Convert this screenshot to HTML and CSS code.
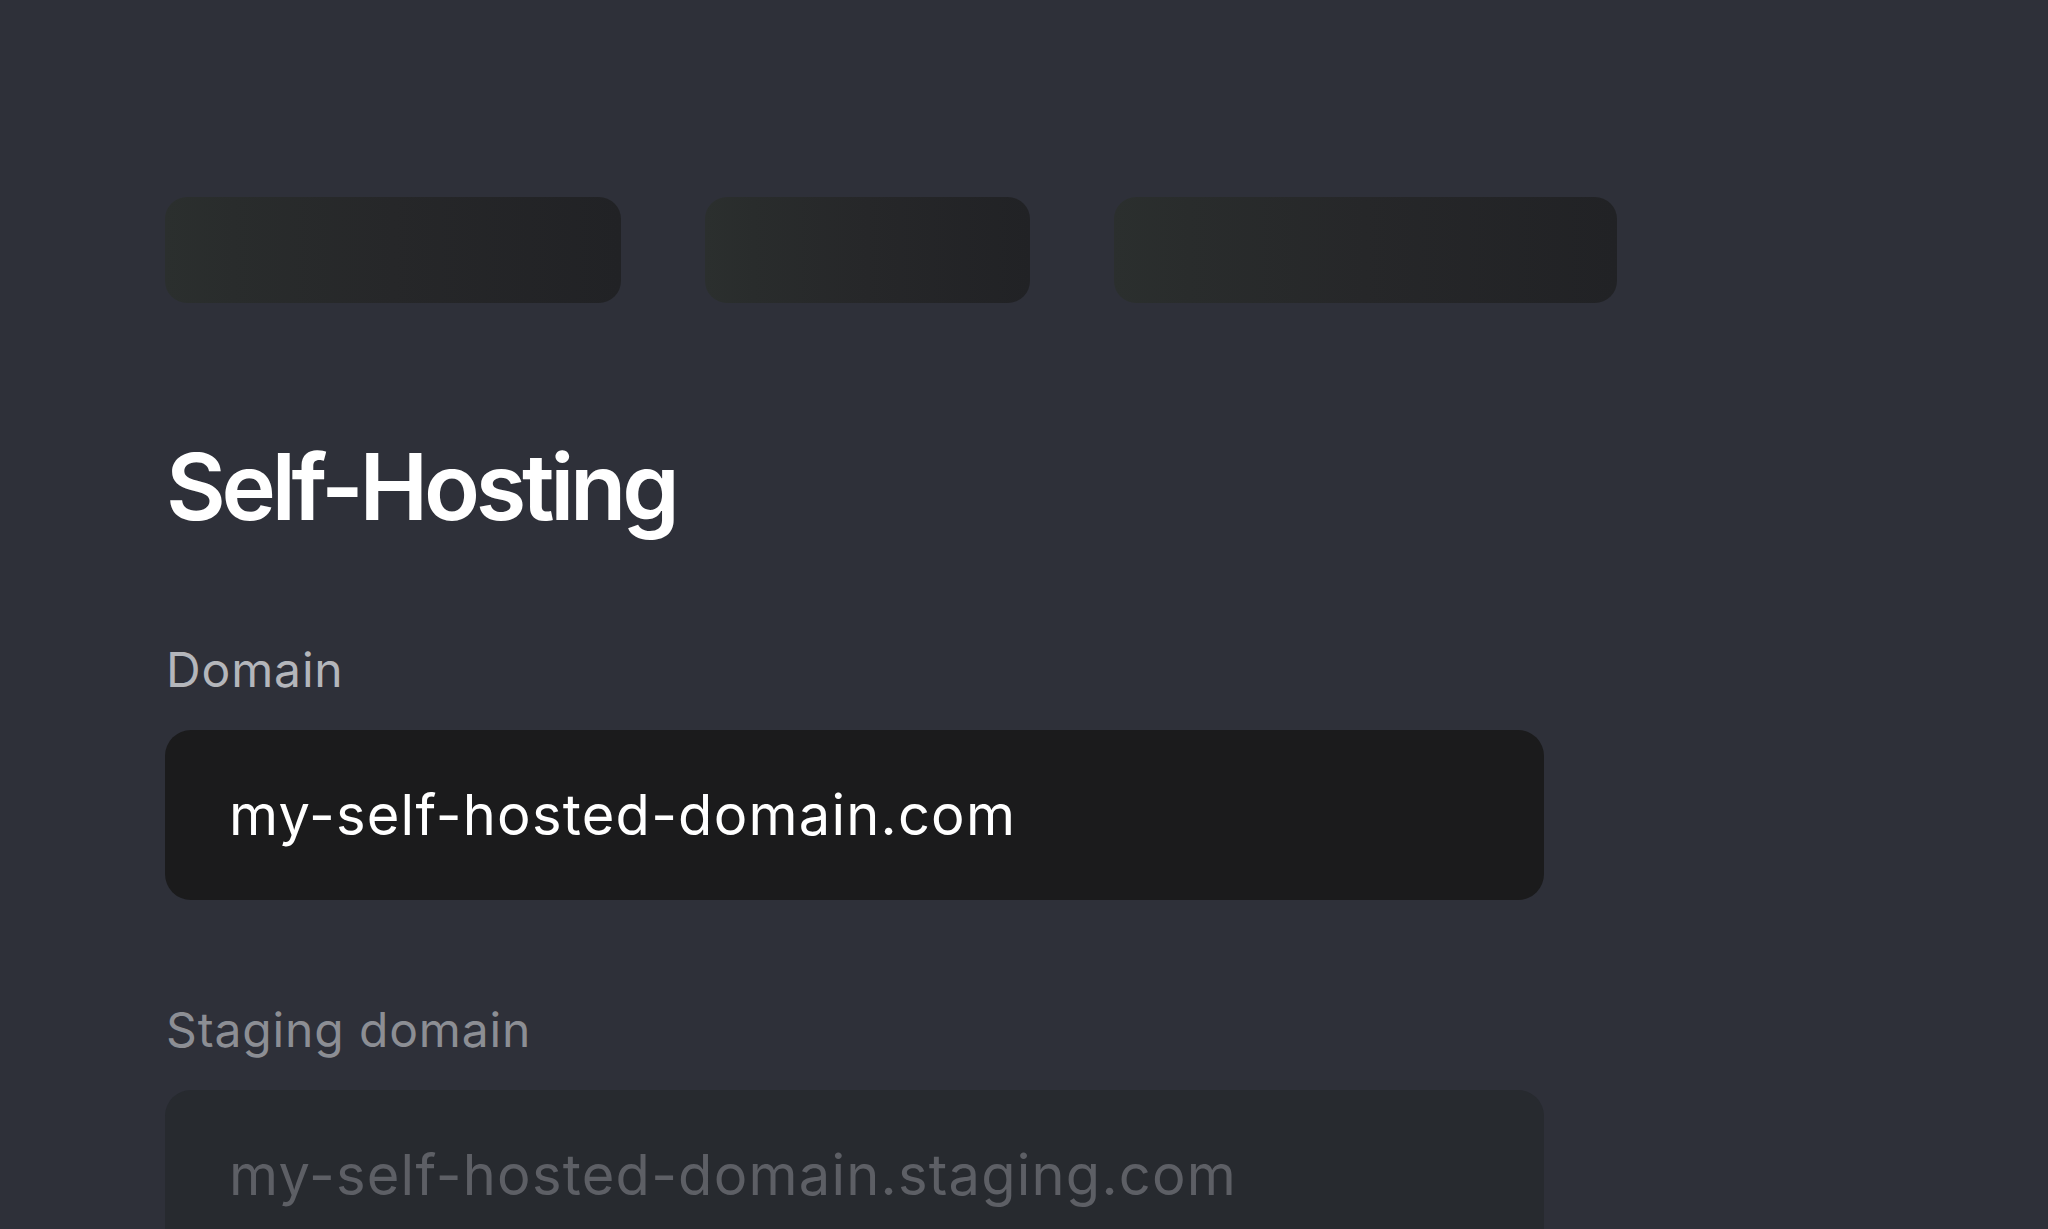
FILE: index.html
```html
<!DOCTYPE html>
<html lang="en">
<head>
<meta charset="utf-8">
<title>Self-Hosting</title>
<link rel="stylesheet" href="styles.css">
</head>
<body>
<main class="page">
  <div class="skeleton-row">
    <div class="skeleton skeleton-a"></div>
    <div class="skeleton skeleton-b"></div>
    <div class="skeleton skeleton-c"></div>
  </div>
  <h1 class="title">Self-Hosting</h1>
  <div class="field">
    <label class="label">Domain</label>
    <div class="input">my-self-hosted-domain.com</div>
  </div>
  <div class="field field-faded">
    <label class="label">Staging domain</label>
    <div class="input">my-self-hosted-domain.staging.com</div>
  </div>
</main>
</body>
</html>
```
FILE: styles.css
```css
html, body {
  margin: 0;
  padding: 0;
  background: #2e3039;
  height: 100%;
  overflow: hidden;
}
body {
  font-family: Inter, "Noto Sans", sans-serif;
  color: #ffffff;
}
.page {
  padding: 197px 0 0 165px;
}
.skeleton-row {
  display: flex;
  gap: 84px;
}
.skeleton {
  height: 106px;
  border-radius: 22px;
  background: linear-gradient(90deg, #2b2f2e 0%, #292c2c 15%, #262729 50%, #212225 100%);
}
.skeleton-a { width: 456px; }
.skeleton-b { width: 325px; }
.skeleton-c { width: 503px; }
.title {
  margin: 138px 0 0 1px;
  font-size: 92px;
  line-height: 92px;
  font-weight: 600;
  letter-spacing: -0.046em;
}
.field {
  display: flex;
  flex-direction: column;
  gap: 36px;
  width: 1379px;
  margin-top: 113px;
}
.field + .field {
  margin-top: 106px;
}
.label {
  font-size: 48px;
  line-height: 48px;
  letter-spacing: 0.018em;
  color: #b4b6bb;
  padding-left: 1px;
}
.input {
  height: 170px;
  box-sizing: border-box;
  display: flex;
  align-items: center;
  padding-left: 64px;
  border-radius: 26px;
  background: #1b1b1c;
  font-size: 56px;
  line-height: 56px;
  letter-spacing: 0.022em;
  color: #ffffff;
}
.field-faded .label {
  color: #8c8e94;
}
.field-faded .input {
  background: #272a2f;
  color: #5d5f65;
}
```
